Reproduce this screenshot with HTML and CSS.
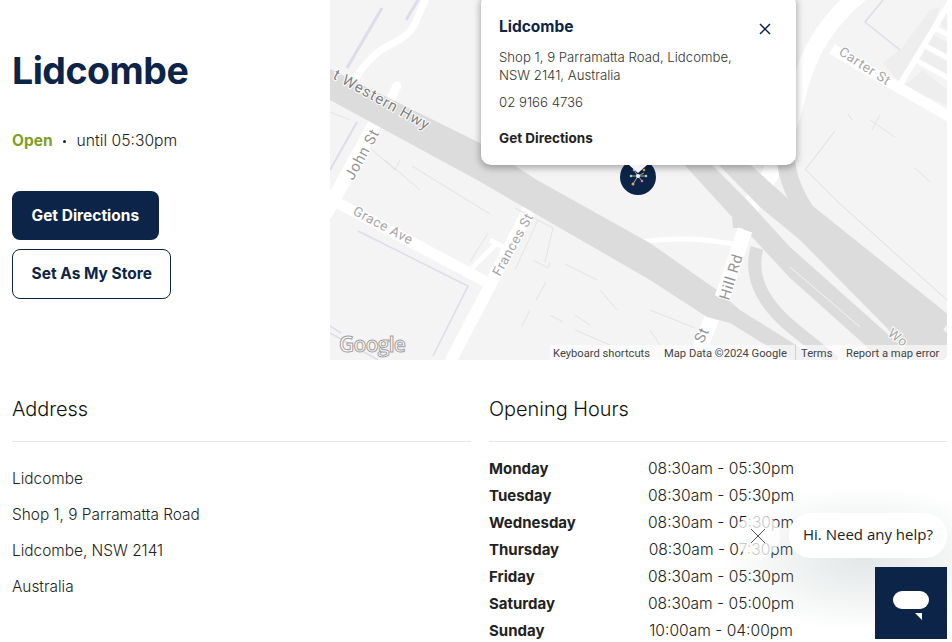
FILE: index.html
```html
<!DOCTYPE html>
<html>

<head>
  <meta charset="utf-8">
  <title>Lidcombe</title>
  <link rel="stylesheet" href="styles.css">
</head>

<body>
  <div class="top">
    <div class="summary">
      <h1>Lidcombe</h1>
      <p class="status"><span class="open">Open</span><span class="dot"></span>until 05:30pm</p>
      <div class="actions">
        <a class="btn btn_solid">Get Directions</a>
        <a class="btn btn_line">Set As My Store</a>
      </div>
    </div>

    <div class="map">
      <svg class="map_art" viewBox="330 0 617 360" width="617" height="360">
        <rect x="330" y="0" width="617" height="360" fill="#f4f4f4" />

        <!-- blocks -->
        <g fill="#eeeeee">
          <polygon points="883,63 902,48 930,10 940,7 930,33 899,82" />
          <polygon points="936,20 947,8 947,30" />
          <polygon points="930,33 947,42 947,55 924,43" />
          <polygon points="922,48 947,62 947,76 915,60" />
          <polygon points="905,85 923,70 947,90 947,105 915,92" />
        </g>

        <!-- white roads -->
        <g fill="none" stroke="#ffffff" stroke-linecap="butt" stroke-linejoin="round">
          <path d="M427 -4 L414 26 Q408 36 392 44 Q370 54 356 78" stroke-width="7" />
          <path d="M397 86 L388 104" stroke-width="9" stroke-linecap="round" />
          <path d="M376 122 L325 215" stroke-width="14" />
          <path d="M338 203 L490 284" stroke-width="11" />
          <path d="M530 209 L450 362" stroke-width="12" />
          <path d="M530 207 L490 284" stroke-width="12" />
          <path d="M497 243 L472 268 M490 240 L505 248" stroke-width="5" />
          <path d="M860 -6 Q815 30 800 85 Q790 130 770 175 L745 215" stroke-width="17" />
          <path d="M832 49 L950 117" stroke-width="11" />
          <path d="M949 4 L899 86" stroke-width="6" />
          <path d="M933 27 L950 36 M922 44 L950 59 M916 60 L950 79" stroke-width="5" />
          <path d="M640 242 Q690 235 732 244" stroke-width="5" />
          <path d="M712 318 L694 362" stroke-width="15" />
        </g>

        <!-- highways -->
        <g fill="#dcdcdc">
          <polygon points="330,69 480,143 537,180 650,243 717,290 740,310 820,360 790,360 730,323 707,317 650,280 477,180 330,100" />
          <polygon points="680,160 707,160 747,200 790,247 900,345 905,360 880,360 865,345 790,278 752,237 742,228 733,228 732,217" />
          <polygon points="714,160 745,160 825,232 947,333 947,360 912,360 887,328 800,240 760,207" />
        </g>
        <g fill="none" stroke="#dcdcdc" stroke-linejoin="round">
          <path d="M786 160 Q788 185 806 212 L947 325" stroke-width="18" />
          <path d="M757 248 Q745 290 795 330 L835 362" stroke-width="13" />
        </g>
        <path d="M790 267 L860 327" fill="none" stroke="#f4f4f4" stroke-width="1" />
        <path d="M745 230 L722 298" fill="none" stroke="#ffffff" stroke-width="15" />

        <!-- building outlines -->
        <g fill="none" stroke="#dcdde6" stroke-width="3">
          <path d="M382 8 L347 68" />
          <path d="M418 0 L406 20" />
          <path d="M358 231 L468 286 L433 356" stroke-width="1.5" />
          <path d="M330 326 L341 333 M330 333 L378 360" stroke-width="1.5" />
          <path d="M357 122 L330 170" stroke-width="2" />
          <path d="M883 0 L865 22 L900 50" stroke-width="1.5" />
          <path d="M835 131 L805 170" stroke-width="1" />
          <path d="M806 170 L838 202 L947 300" stroke-width="1" />
        </g>
        <g fill="none" stroke="#e3e3e3" stroke-width="1">
          <path d="M330 112 L350 120 M370 148 L395 170 L400 160 M385 160 L420 190 M412 166 L490 214" />
          <path d="M515 208 L553 228 L545 262 M533 260 L548 268 L550 262 M565 264 L597 280 M546 282 L536 300" />
          <path d="M600 290 L617 310 M550 315 L563 322 M575 315 L590 325 M575 330 L610 345 M530 310 L522 326" />
          <path d="M538 220 L515 270 M488 233 L470 262" />
          <path d="M848 114 L852 120 M870 120 L895 137 M880 115 L872 130 M915 168 L930 182" />
          <path d="M650 310 L695 328 M650 330 L660 345" />
        </g>

        <!-- street names -->
        <g class="road_label">
          <text class="road_major" transform="translate(332 78) rotate(29)">t Western Hwy</text>
          <text class="road_mid" transform="translate(353 181) rotate(-61)">John St</text>
          <text transform="translate(352 214) rotate(28)">Grace Ave</text>
          <text transform="translate(500 277) rotate(-61)">Frances St</text>
          <text class="road_mid" transform="translate(729 301) rotate(-73)">Hill Rd</text>
          <text class="road_mid" transform="translate(703 344) rotate(-65)">St</text>
          <text transform="translate(838 54) rotate(33)">Carter St</text>
          <text transform="translate(887 335) rotate(37)">Wo</text>
        </g>

        <text class="google_logo" x="339" y="352">Google</text>

        <!-- marker -->
        <circle cx="638" cy="177" r="18" fill="#0c2448" />
        <g stroke="#d8c9a0" stroke-width="0.8">
          <path d="M638 176 L634 170 M638 176 L644 173 M638 176 L631 176 M638 176 L646 176 M638 176 L642 181 M638 176 L633 184" />
        </g>
        <circle cx="638" cy="176" r="2" fill="#e6f6ff" />
        <circle cx="634" cy="170" r="1.3" fill="#c9a6dc" />
        <circle cx="644" cy="170" r="1.3" fill="#e0a660" />
        <circle cx="631" cy="176" r="1.3" fill="#a8d8a0" />
        <circle cx="646" cy="176" r="1.3" fill="#a8d8a0" />
        <circle cx="642" cy="181" r="1.3" fill="#e070d0" />
        <circle cx="633" cy="184" r="1.5" fill="#e0a660" />
      </svg>

      <div class="popup">
        <button class="popup_close" aria-label="Close">
          <svg viewBox="0 0 12 12" width="12" height="12">
            <path d="M1 1 L11 11 M11 1 L1 11" stroke="#0c2448" stroke-width="1.5" fill="none" />
          </svg>
        </button>
        <h3>Lidcombe</h3>
        <p class="popup_addr">Shop 1, 9 Parramatta Road, Lidcombe,<br>NSW 2141, Australia</p>
        <p class="popup_phone">02 9166 4736</p>
        <a class="popup_link">Get Directions</a>
      </div>
      <div class="popup_tip"></div>

      <div class="map_credits">
        <span class="credit_keys">Keyboard shortcuts</span>
        <span class="credit_data">Map Data ©2024 Google</span>
        <span class="credit_terms">Terms</span>
        <span>Report a map error</span>
      </div>
    </div>
  </div>

  <div class="details">
    <section>
      <h2>Address</h2>
      <div class="address">
        <p>Lidcombe</p>
        <p>Shop 1, 9 Parramatta Road</p>
        <p>Lidcombe, NSW 2141</p>
        <p>Australia</p>
      </div>
    </section>
    <section>
      <h2>Opening Hours</h2>
      <div class="hours">
        <b>Monday</b><span>08:30am - 05:30pm</span>
        <b>Tuesday</b><span>08:30am - 05:30pm</span>
        <b>Wednesday</b><span>08:30am - 05:30pm</span>
        <b>Thursday</b><span>08:30am - 07:30pm</span>
        <b>Friday</b><span>08:30am - 05:30pm</span>
        <b>Saturday</b><span>08:30am - 05:00pm</span>
        <b>Sunday</b><span>10:00am - 04:00pm</span>
      </div>
    </section>
  </div>

  <div class="chat_glow"></div>
  <button class="chat_dismiss" aria-label="Dismiss">
    <svg viewBox="0 0 16 16" width="16" height="16">
      <path d="M1 1 L15 15 M15 1 L1 15" stroke="#555555" stroke-width="1" fill="none" />
    </svg>
  </button>
  <div class="chat_bubble">Hi. Need any help?</div>
  <div class="chat_launcher">
    <svg viewBox="0 0 36 30" width="36" height="30">
      <rect x="0" y="0" width="36" height="18" rx="9" fill="#ffffff" />
      <polygon points="22,22 29,22 29,29" fill="#ffffff" />
    </svg>
  </div>
</body>

</html>
```

FILE: styles.css
```css
html,
body {
  margin: 0;
  height: 100%;
  overflow: hidden;
  background: #ffffff;
}

body {
  font-family: "Inter", "Liberation Sans", sans-serif;
  color: #222222;
  width: 947px;
}

p {
  margin: 0;
}

.top {
  display: flex;
  height: 360px;
}

.summary {
  width: 330px;
  box-sizing: border-box;
  padding: 48px 0 0 12px;
}

h1 {
  margin: 0;
  font-size: 37.5px;
  line-height: 46px;
  font-weight: 700;
  letter-spacing: -0.5px;
  color: #0c2448;
}

.status {
  margin-top: 36px;
  display: flex;
  align-items: center;
  font-size: 15.7px;
  font-weight: 300;
  line-height: 22px;
  color: #222222;
}

.open {
  color: #7da025;
  font-weight: 700;
  font-size: 15.5px;
}

.dot {
  width: 3px;
  height: 3px;
  border-radius: 50%;
  background: #222222;
  margin: 0 11px 0 10px;
}

.actions {
  margin-top: 39px;
  display: flex;
  flex-direction: column;
  align-items: flex-start;
  gap: 9px;
}

.btn {
  display: block;
  box-sizing: border-box;
  border-radius: 8px;
  font-size: 15.5px;
  font-weight: 700;
  padding: 0 19.5px;
  line-height: 49px;
  height: 49px;
}

.btn_solid {
  background: #0c2448;
  color: #ffffff;
}

.btn_line {
  border: 1px solid #0c2448;
  color: #0c2448;
  height: 50px;
  line-height: 48px;
  padding: 0 18.5px;
}

.map {
  position: relative;
  width: 617px;
  height: 360px;
  overflow: hidden;
  border-bottom-right-radius: 6px;
}

.map_art {
  display: block;
}

.road_label text {
  font-family: "Roboto", sans-serif;
  font-size: 13.5px;
  letter-spacing: 0.6px;
  fill: #a6a6a6;
  stroke: #ffffff;
  stroke-width: 2px;
  paint-order: stroke;
}

.road_label .road_major {
  font-size: 15px;
  letter-spacing: 0.9px;
  fill: #808080;
}

.road_label .road_mid {
  font-size: 15px;
  letter-spacing: 0.6px;
  fill: #959595;
}

.google_logo {
  font-family: "Open Sans", sans-serif;
  font-size: 21px;
  font-weight: 600;
  letter-spacing: -0.7px;
  fill: #ffffff;
  stroke: #a0a0a0;
  stroke-width: 1px;
}

.popup {
  position: absolute;
  left: 151px;
  top: -6px;
  width: 315px;
  height: 171px;
  box-sizing: border-box;
  padding: 23px 18px 0;
  background: #ffffff;
  border-radius: 10px;
  box-shadow: 0 2px 7px 1px rgba(0, 0, 0, 0.3);
}

.popup_tip {
  position: absolute;
  left: 299px;
  top: 165px;
  width: 0;
  height: 0;
  border-left: 9px solid transparent;
  border-right: 9px solid transparent;
  border-top: 8px solid #f4f4f4;
}

.popup h3 {
  margin: 0;
  font-size: 15.5px;
  line-height: 20px;
  font-weight: 700;
  color: #0c2448;
}

.popup_close {
  position: absolute;
  right: 25px;
  top: 29px;
  padding: 0;
  border: none;
  background: none;
  line-height: 0;
}

.popup_addr {
  margin-top: 11px;
  font-size: 13.2px;
  font-weight: 300;
  line-height: 18px;
  color: #333333;
}

.popup_phone {
  margin-top: 9px;
  font-size: 13.2px;
  font-weight: 300;
  line-height: 18px;
  color: #333333;
}

.popup_link {
  display: block;
  margin-top: 18px;
  font-size: 13.5px;
  line-height: 18px;
  font-weight: 700;
  color: #222222;
}

.map_credits {
  position: absolute;
  right: 0;
  bottom: 0;
  width: 397px;
  height: 15px;
  box-sizing: border-box;
  padding-left: 3px;
  display: flex;
  background: rgba(255, 255, 255, 0.6);
  font-family: "Roboto", sans-serif;
  font-size: 11.2px;
  line-height: 17px;
  color: #444444;
  white-space: nowrap;
}

.credit_keys {
  width: 111px;
}

.credit_data {
  width: 131px;
  border-right: 1px solid #d0d0d0;
}

.credit_terms {
  margin-left: 5px;
  width: 45px;
}

.details {
  display: grid;
  grid-template-columns: 459px 458px;
  gap: 18px;
  margin-left: 12px;
  padding-top: 36px;
}

h2 {
  margin: 0;
  padding-bottom: 18px;
  border-bottom: 1px solid #e6e6e6;
  font-size: 19.9px;
  line-height: 27px;
  font-weight: 300;
  color: #111111;
}

.address {
  padding-top: 19px;
  font-size: 15.4px;
  font-weight: 300;
  line-height: 36px;
  color: #222222;
}

.hours {
  display: grid;
  grid-template-columns: 152px 160px;
  grid-auto-rows: 27px;
  padding-top: 13px;
  font-size: 15px;
  line-height: 27px;
}

.hours b {
  color: #222222;
}

.hours span {
  font-size: 15.6px;
  font-weight: 300;
  text-align: center;
  color: #222222;
}

.chat_glow {
  position: absolute;
  left: 700px;
  top: 490px;
  width: 252px;
  height: 152px;
  background: radial-gradient(ellipse at 65% 45%, rgba(160, 175, 175, 0.3), rgba(160, 175, 175, 0) 62%);
}

.chat_dismiss {
  position: absolute;
  left: 736px;
  top: 514px;
  width: 44px;
  height: 44px;
  padding: 0;
  border: none;
  border-radius: 50%;
  background: rgba(255, 255, 255, 0.75);
  display: flex;
  align-items: center;
  justify-content: center;
}

.chat_bubble {
  position: absolute;
  left: 789px;
  top: 513px;
  width: 158px;
  height: 45px;
  box-sizing: border-box;
  padding-left: 14px;
  background: #ffffff;
  border-radius: 22px;
  font-family: "Open Sans", sans-serif;
  font-size: 15px;
  line-height: 42px;
  color: #222222;
  white-space: nowrap;
}

.chat_launcher {
  position: absolute;
  left: 875px;
  top: 567px;
  width: 72px;
  height: 72px;
  background: #0c2448;
  display: flex;
  justify-content: center;
  align-items: center;
  padding-top: 6px;
  box-sizing: border-box;
}
```
